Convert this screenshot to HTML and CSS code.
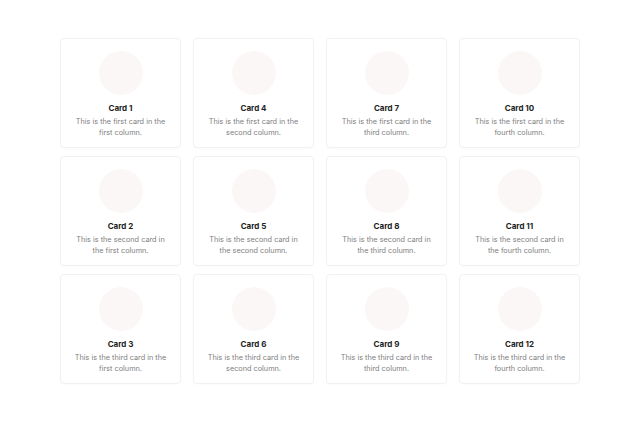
FILE: index.html
```html
<!DOCTYPE html>
<html lang="en">
<head>
  <meta charset="UTF-8">
  <meta name="viewport" content="width=device-width, initial-scale=1">
  <title>Cards</title>
  <link rel="stylesheet" href="styles.css">
</head>
<body>
  <div class="page">
    <div class="grid">
      <!-- column 1 -->
      <div class="column">
        <div class="card">
          <div class="avatar"></div>
          <h3>Card 1</h3>
          <p>This is the first card in the first column.</p>
        </div>
        <div class="card">
          <div class="avatar"></div>
          <h3>Card 2</h3>
          <p>This is the second card in the first column.</p>
        </div>
        <div class="card">
          <div class="avatar"></div>
          <h3>Card 3</h3>
          <p>This is the third card in the first column.</p>
        </div>
      </div>
      <!-- column 2 -->
      <div class="column">
        <div class="card">
          <div class="avatar"></div>
          <h3>Card 4</h3>
          <p>This is the first card in the second column.</p>
        </div>
        <div class="card">
          <div class="avatar"></div>
          <h3>Card 5</h3>
          <p>This is the second card in the second column.</p>
        </div>
        <div class="card">
          <div class="avatar"></div>
          <h3>Card 6</h3>
          <p>This is the third card in the second column.</p>
        </div>
      </div>
      <!-- column 3 -->
      <div class="column">
        <div class="card">
          <div class="avatar"></div>
          <h3>Card 7</h3>
          <p>This is the first card in the third column.</p>
        </div>
        <div class="card">
          <div class="avatar"></div>
          <h3>Card 8</h3>
          <p>This is the second card in the third column.</p>
        </div>
        <div class="card">
          <div class="avatar"></div>
          <h3>Card 9</h3>
          <p>This is the third card in the third column.</p>
        </div>
      </div>
      <!-- column 4 -->
      <div class="column">
        <div class="card">
          <div class="avatar"></div>
          <h3>Card 10</h3>
          <p>This is the first card in the fourth column.</p>
        </div>
        <div class="card">
          <div class="avatar"></div>
          <h3>Card 11</h3>
          <p>This is the second card in the fourth column.</p>
        </div>
        <div class="card">
          <div class="avatar"></div>
          <h3>Card 12</h3>
          <p>This is the third card in the fourth column.</p>
        </div>
      </div>
    </div>
  </div>
</body>
</html>
```

FILE: styles.css
```css
/* ----- base ----- */
body {
  margin: 0;
  font-family: Inter, 'Noto Sans', sans-serif;
  background: #ffffff;
}

.page {
  height: 421px;
  display: flex;
  align-items: center;
  justify-content: center;
}

.grid {
  display: flex;
  gap: 12px;
}

.column {
  display: flex;
  flex-direction: column;
  gap: 8px;
}

/* ----- cards ----- */
.card {
  box-sizing: border-box;
  width: 121px;
  height: 110px;
  padding: 12px 10px 0;
  border: 1px solid #f1f1f1;
  border-radius: 4px;
  box-shadow: 0 1px 2px rgba(0,0,0,0.02);
  text-align: center;
}

.avatar {
  width: 44px;
  height: 44px;
  margin: 0 auto;
  border-radius: 50%;
  background: #fcf7f7;
}

.card h3 {
  margin: 8px 0 2px;
  font-size: 8px;
  font-weight: 700;
  color: #222;
  line-height: 11px;
}

.card p {
  margin: 0;
  font-size: 7.3px;
  line-height: 11px;
  color: #808080;
}
```
